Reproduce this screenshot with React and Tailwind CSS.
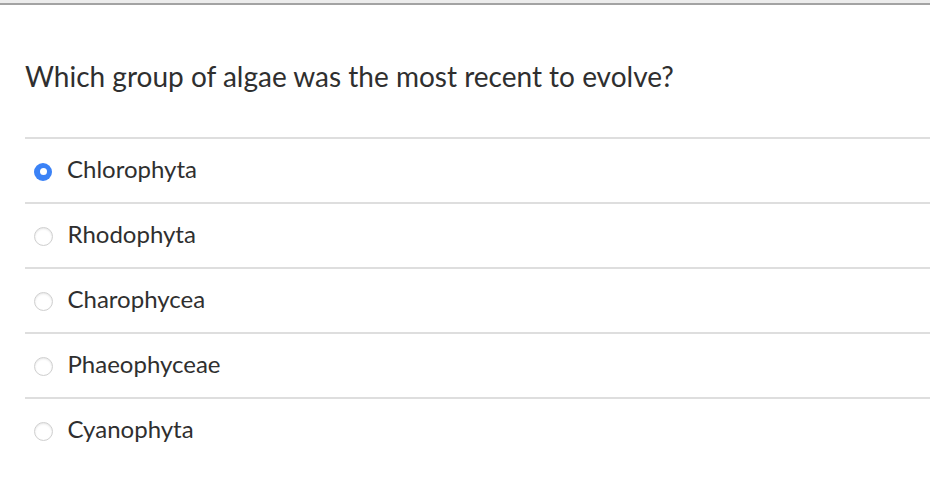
import React from "react";

const options = [
  { label: "Chlorophyta", checked: true },
  { label: "Rhodophyta", checked: false },
  { label: "Charophycea", checked: false },
  { label: "Phaeophyceae", checked: false },
  { label: "Cyanophyta", checked: false },
];

const Radio = ({ checked }) =>
  checked ? (
    <span className="w-[18px] h-[18px] mt-[2px] rounded-full bg-[#3b82f6] flex items-center justify-center shrink-0">
      <span className="w-[7px] h-[7px] rounded-full bg-white" />
    </span>
  ) : (
    <span className="w-[19px] h-[19px] mt-[2px] -ml-[0.5px] rounded-full border border-[#cfcfcf] bg-white shadow-[inset_0_1px_2px_rgba(0,0,0,0.1)] shrink-0" />
  );

export default function App() {
  return (
    <div className="min-h-screen bg-white font-['Lato',sans-serif] text-[#2d3b45]">
      <div className="h-[3px] bg-[#ececec]" />
      <div className="h-[2px] bg-[#a3a3a3]" />
      <div className="pl-[25px]">
        <h1 className="pt-[53px] pb-[43px] text-[28px] leading-[36px] text-[#2f2f2f]">
          Which group of algae was the most recent to evolve?
        </h1>
        <div>
          {options.map((opt, i) => (
            <div
              key={i}
              className="flex items-center gap-[15px] pl-[9px] h-[65px] border-t-2 border-[#dedede]"
            >
              <Radio checked={opt.checked} />
              <span className="pb-[4px] text-[24px] leading-[30px] text-[#2f2f2f]">{opt.label}</span>
            </div>
          ))}
        </div>
      </div>
    </div>
  );
}
